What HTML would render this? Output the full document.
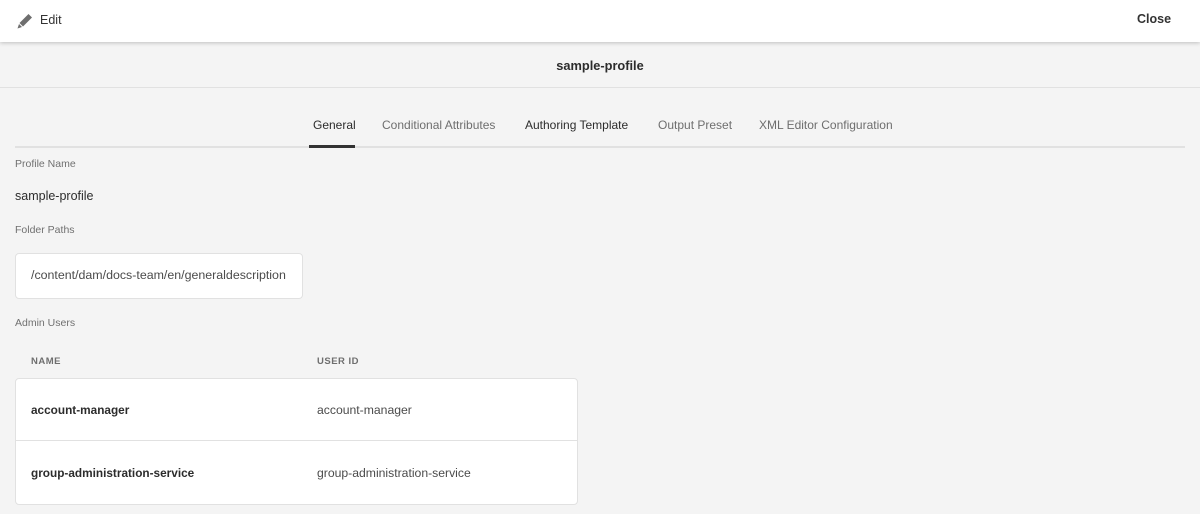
<!DOCTYPE html>
<html><head><style>
*{box-sizing:border-box;margin:0;padding:0}
body{width:1200px;height:514px;overflow:hidden;background:#f4f4f4;font-family:"Liberation Sans",sans-serif;color:#2c2c2c;position:relative}
.hdr{position:absolute;left:0;top:0;width:1200px;height:42px;background:#fff;box-shadow:0 1px 4px rgba(0,0,0,.22);z-index:2}
.abs{position:absolute;white-space:nowrap}
.title{left:0;width:1200px;top:58px;text-align:center;font-weight:bold;font-size:12.8px;color:#2c2c2c}
.line{position:absolute;left:0;width:1200px;top:87px;height:1px;background:#e1e1e1}
.tab{top:118px;font-size:12px;color:#6e6e6e}
.lbl{font-size:10.5px;color:#707070}
.box{position:absolute;background:#fff;border:1px solid #e1e1e1;border-radius:4px}
</style></head><body>
<div class="hdr">
<svg class="abs" style="left:16px;top:12px" width="18" height="18" viewBox="0 0 18 18"><path d="M12.5 2l3.5 3.5-9 9-3.5-3.5z" fill="#6e6e6e"/><path d="M3 12l3 3-4.5 1.5z" fill="#6e6e6e"/></svg>
<div class="abs" style="left:40px;top:13px;font-size:12.5px;color:#333">Edit</div>
<div class="abs" style="left:1137px;top:12px;font-size:12.5px;font-weight:bold;color:#333">Close</div>
</div>
<div class="abs title">sample-profile</div>
<div class="line"></div>
<div class="abs tab" style="left:313px;color:#2c2c2c">General</div>
<div class="abs tab" style="left:382px">Conditional Attributes</div>
<div class="abs tab" style="left:525px;color:#2c2c2c">Authoring Template</div>
<div class="abs tab" style="left:658px">Output Preset</div>
<div class="abs tab" style="left:759px">XML Editor Configuration</div>
<div class="abs" style="left:15px;top:146px;width:1170px;height:2px;background:#e1e1e1"></div>
<div class="abs" style="left:309px;top:145px;width:46px;height:3px;background:#323232"></div>
<div class="abs lbl" style="left:15px;top:158px">Profile Name</div>
<div class="abs" style="left:15px;top:189px;font-size:12.5px">sample-profile</div>
<div class="abs lbl" style="left:15px;top:224px">Folder Paths</div>
<div class="box" style="left:15px;top:253px;width:288px;height:46px"></div>
<div class="abs" style="left:31px;top:268px;font-size:12.4px;color:#4b4b4b">/content/dam/docs-team/en/generaldescription</div>
<div class="abs lbl" style="left:15px;top:317px">Admin Users</div>
<div class="abs" style="left:31px;top:356px;font-size:9.5px;font-weight:bold;color:#6e6e6e;letter-spacing:.5px">NAME</div>
<div class="abs" style="left:317px;top:356px;font-size:9.5px;font-weight:bold;color:#6e6e6e;letter-spacing:.5px">USER ID</div>
<div class="box" style="left:15px;top:378px;width:563px;height:127px"></div>
<div class="abs" style="left:16px;top:440px;width:561px;height:1px;background:#e1e1e1"></div>
<div class="abs" style="left:31px;top:403px;font-size:11.8px;font-weight:bold">account-manager</div>
<div class="abs" style="left:317px;top:403px;font-size:12.2px;color:#4b4b4b">account-manager</div>
<div class="abs" style="left:31px;top:466px;font-size:11.8px;font-weight:bold">group-administration-service</div>
<div class="abs" style="left:317px;top:466px;font-size:12.2px;color:#4b4b4b">group-administration-service</div>
</body></html>
